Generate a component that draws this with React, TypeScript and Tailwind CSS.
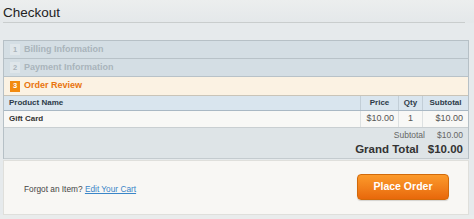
import React from "react";

type Step = { n: number; label: string; active?: boolean };

const steps: Step[] = [
  { n: 1, label: "Billing Information" },
  { n: 2, label: "Payment Information" },
  { n: 3, label: "Order Review", active: true },
];

export default function App() {
  return (
    <div
      className="w-[474px] h-[219px] overflow-hidden bg-[#e9ecec] text-[#333]"
      style={{ fontFamily: '"Liberation Sans", Arial, sans-serif' }}
    >
      <div className="px-[3px] bg-gradient-to-b from-[#eceeee] to-[#e4e8ea]">
        <h1 className="h-[23px] pt-[4px] text-[13.5px] leading-[17px] text-[#222] border-b border-[#c9cdcd] mr-[6px]">
          Checkout
        </h1>
      </div>

      <div className="pt-[17px] px-[3px] bg-[#e6eaec]">
        <div className="w-[466px] border border-[#b6c0c6] border-b-0">
          {steps.map((s) => (
            <div
              key={s.n}
              className={
                s.active
                  ? "h-[19px] flex items-center gap-[4px] pl-[6px] bg-[#fbf2e3] border-b border-[#c9c4b8]"
                  : "h-[18px] flex items-center gap-[4px] pl-[6px] bg-[#d4dee4] border-b border-[#b8c2c8]"
              }
            >
              <span
                className={
                  s.active
                    ? "w-[10px] h-[11px] flex items-center justify-center text-[7.5px] font-bold bg-[#f28a0f] text-white"
                    : "w-[10px] h-[11px] flex items-center justify-center text-[7.5px] font-bold bg-[#dfe6ea] text-[#aab4bb]"
                }
              >
                {s.n}
              </span>
              <span
                className={
                  s.active
                    ? "text-[9px] font-bold text-[#e8740e]"
                    : "text-[9px] font-bold text-[#a9b4bb]"
                }
              >
                {s.label}
              </span>
            </div>
          ))}

          <div className="flex h-[15px] items-center text-[8px] font-bold text-[#2c3a48] bg-[#d9e5ee] border-b border-[#a9b8c4]">
            <div className="flex-1 pl-[5px]">Product Name</div>
            <div className="w-[38px] h-full flex items-center justify-center border-l border-[#c2ced7]">Price</div>
            <div className="w-[24px] h-full flex items-center justify-center border-l border-[#c2ced7]">Qty</div>
            <div className="w-[46px] h-full flex items-center justify-center border-l border-[#c2ced7]">Subtotal</div>
          </div>

          <div className="flex h-[17px] items-center text-[9px] bg-[#f8f8f6] border-b border-[#c9cfd2]">
            <div className="flex-1 pl-[5px] text-[8px] font-bold text-[#333]">Gift Card</div>
            <div className="w-[38px] h-full flex items-center justify-end pr-[4px] border-l border-[#dde1e2] text-[#555]">$10.00</div>
            <div className="w-[24px] h-full flex items-center justify-center border-l border-[#dde1e2] text-[#555]">1</div>
            <div className="w-[46px] h-full flex items-center justify-end pr-[5px] border-l border-[#dde1e2] text-[#555]">$10.00</div>
          </div>

          <div className="h-[31px] bg-[#dee4e7] border-b border-[#c4cbcf] pr-[5px] flex flex-col">
            <div className="flex justify-end items-center h-[12px] mt-px text-[8.5px] text-[#666]">
              <span className="mr-[12px]">Subtotal</span>
              <span>$10.00</span>
            </div>
            <div className="flex justify-end items-center h-[17px] text-[11.5px] font-bold text-[#333]">
              <span className="mr-[9px]">Grand Total</span>
              <span>$10.00</span>
            </div>
          </div>
        </div>
      </div>

      <div className="px-[3px] pt-px bg-[#e6eaec]">
        <div className="w-[466px] h-[55px] bg-[#f8f7f4] border border-[#dfdfdb] flex items-center justify-between pl-[20px] pr-[19px]">
          <div className="text-[8.3px] text-[#444] pt-[4px]">
            Forgot an Item?{" "}
            <a className="text-[#3a86c8] underline" href="#">
              Edit Your Cart
            </a>
          </div>
          <button className="w-[92px] h-[26px] mb-[2px] rounded-[4px] border border-[#d26a0a] bg-gradient-to-b from-[#fc9a2a] to-[#e8680a] text-white text-[10.5px] font-bold shadow-[0_1px_1px_rgba(0,0,0,0.15)]">
            Place Order
          </button>
        </div>
      </div>
    </div>
  );
}
